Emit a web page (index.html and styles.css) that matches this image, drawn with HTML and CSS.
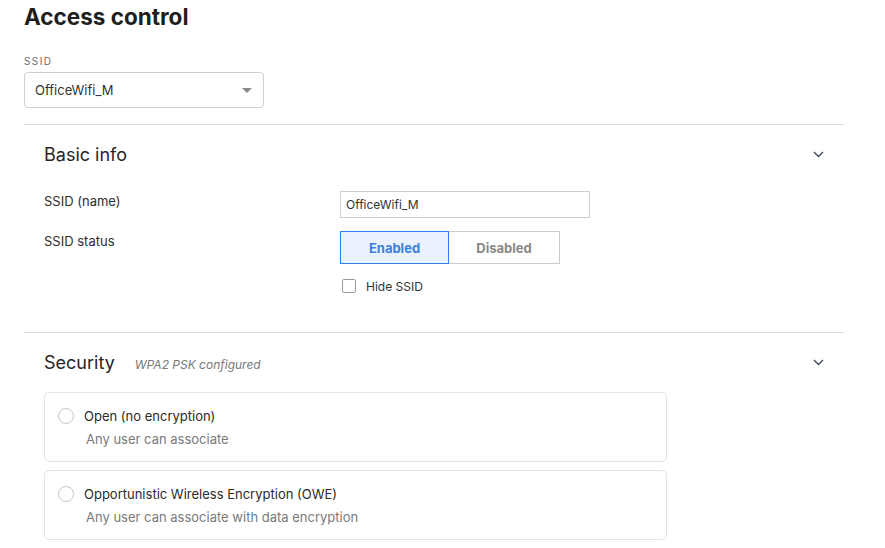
FILE: index.html
```html
<!DOCTYPE html>
<html>
<head>
<meta charset="utf-8">
<link rel="stylesheet" href="styles.css">
</head>
<body>
<div class="page">
  <h1 class="title">Access control</h1>
  <div class="field-label">SSID</div>
  <div class="select">
    <span>OfficeWifi_M</span>
    <span class="caret"></span>
  </div>

  <section class="section basic">
    <div class="section-head">
      <div class="section-title">Basic info</div>
      <svg class="chev" width="11" height="7" viewBox="0 0 11 7"><path d="M1 1 L5.5 5.5 L10 1" fill="none" stroke="#3b4a5c" stroke-width="1.4"/></svg>
    </div>
    <div class="form">
      <div class="row row-name">
        <div class="row-label">SSID (name)</div>
        <div class="input">OfficeWifi_M</div>
      </div>
      <div class="row row-status">
        <div class="row-label">SSID status</div>
        <div class="control">
          <div class="segment">
            <div class="seg seg-on">Enabled</div>
            <div class="seg seg-off">Disabled</div>
          </div>
          <label class="check"><span class="box"></span><span>Hide SSID</span></label>
        </div>
      </div>
    </div>
  </section>

  <section class="section security">
    <div class="section-head">
      <div class="section-title">Security <span class="hint">WPA2 PSK configured</span></div>
      <svg class="chev" width="11" height="7" viewBox="0 0 11 7"><path d="M1 1 L5.5 5.5 L10 1" fill="none" stroke="#3b4a5c" stroke-width="1.4"/></svg>
    </div>
    <div class="cards">
      <div class="card">
        <div class="card-top"><span class="radio"></span><span class="card-title">Open (no encryption)</span></div>
        <div class="card-desc">Any user can associate</div>
      </div>
      <div class="card">
        <div class="card-top"><span class="radio"></span><span class="card-title">Opportunistic Wireless Encryption (OWE)</span></div>
        <div class="card-desc">Any user can associate with data encryption</div>
      </div>
    </div>
  </section>
</div>
</body>
</html>
```
FILE: styles.css
```css
* { box-sizing: border-box; }
html, body { margin: 0; padding: 0; background: #fff; }
body { font-family: Inter, "Noto Sans", sans-serif; color: #333; }
.page { padding: 0 41px 0 24px; }
.title { margin: 0; font-size: 22.5px; font-weight: 700; line-height: 34px; color: #1f1f1f; }
.field-label { margin-top: 20px; font-size: 10px; line-height: 14px; letter-spacing: 1.4px; color: #6b6b6b; text-transform: uppercase; }
.select { margin-top: 4px; width: 240px; height: 36px; border: 1px solid #cfcfcf; border-radius: 4px; display: flex; align-items: center; justify-content: space-between; padding: 0 10px 0 10px; font-size: 13px; color: #333; }
.caret { width: 0; height: 0; border-left: 5px solid transparent; border-right: 5px solid transparent; border-top: 5px solid #888; margin-right: 1px; }
.section { border-top: 1px solid #dcdcdc; }
.basic { margin-top: 16px; padding-bottom: 39px; }
.section-head { height: 58px; display: flex; align-items: center; justify-content: space-between; padding: 0 20px; }
.section-title { font-size: 18px; color: #262626; display: flex; align-items: baseline; }
.hint { font-size: 12px; font-style: italic; color: #777; margin-left: 20px; }
.chev { display: block; margin-top: 1px; }
.form { padding-left: 20px; padding-top: 8px; }
.row { display: flex; }
.row-label { width: 296px; font-size: 13px; line-height: 20px; color: #2e2e2e; }
.input { width: 250px; height: 27px; border: 1px solid #cfcfcf; font-size: 12px; line-height: 25px; padding-left: 5px; color: #333; }
.row-status { margin-top: 13px; }
.segment { display: flex; width: 220px; height: 33px; }
.seg { display: flex; align-items: center; justify-content: center; font-size: 13px; font-weight: 700; }
.seg-on { width: 109px; background: #e9f2fe; border: 1px solid #2f80ed; color: #3b7fe0; }
.seg-off { flex: 1; border: 1px solid #cccccc; border-left: none; color: #8a8a8a; }
.check { display: flex; align-items: center; margin-top: 15px; margin-left: 2px; font-size: 12px; color: #333; height: 14px; }
.box { width: 14px; height: 14px; border: 1px solid #999; border-radius: 2px; margin-right: 10px; }
.cards { padding: 1px 177px 0 20px; display: flex; flex-direction: column; gap: 8px; }
.card { border: 1px solid #e3e3e3; border-radius: 5px; padding: 14px 13px 12px 13px; height: 70px; }
.card-top { display: flex; align-items: center; height: 18px; }
.radio { width: 16px; height: 16px; border: 1px solid #c8c8c8; border-radius: 50%; margin-right: 10px; }
.card-title { font-size: 13px; color: #2b2b2b; }
.card-desc { margin-top: 5px; padding-left: 28px; font-size: 13px; line-height: 18px; color: #7a7a7a; }
```
